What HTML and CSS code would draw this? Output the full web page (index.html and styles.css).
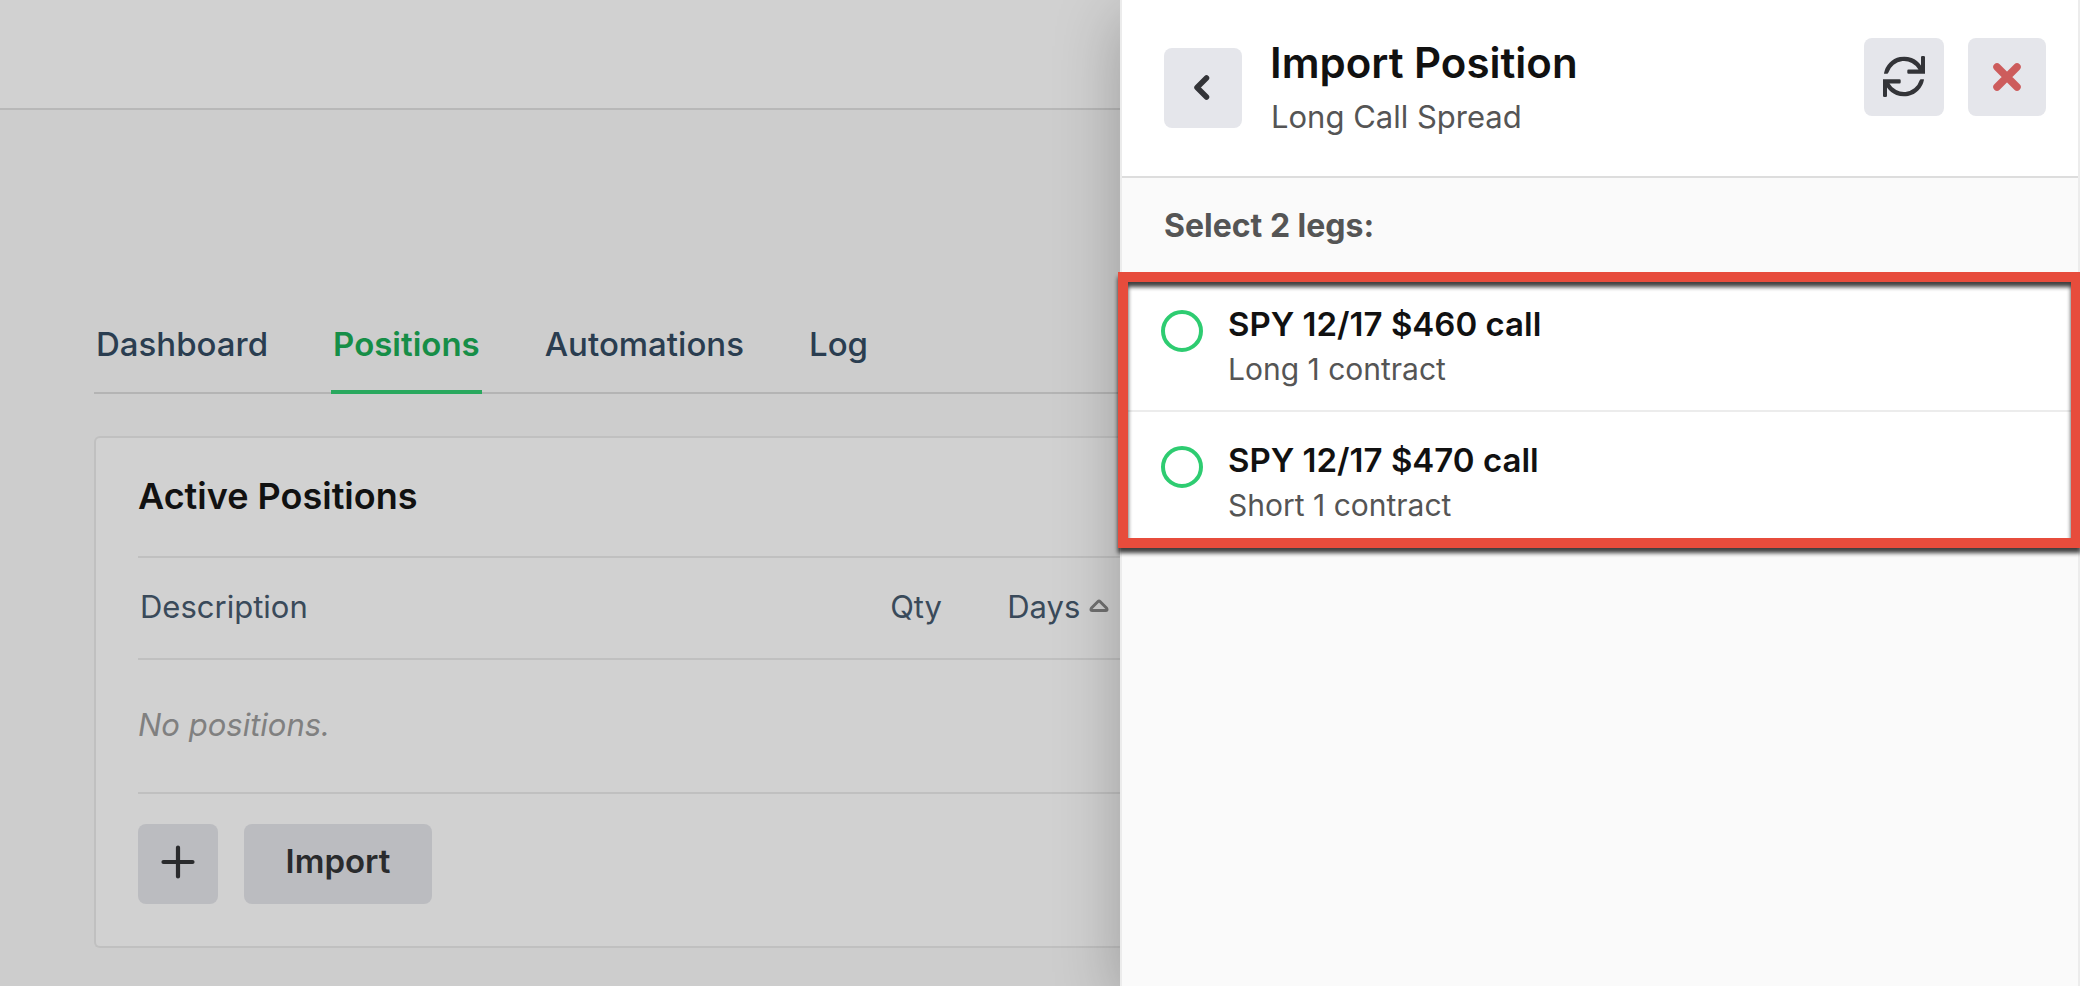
FILE: index.html
```html
<!DOCTYPE html>
<html lang="en">
<head>
  <meta charset="UTF-8">
  <meta name="viewport" content="width=device-width, initial-scale=1">
  <title>Import Position</title>
  <link rel="stylesheet" href="styles.css">
</head>
<body>
  <div class="app">
    <div class="page">
      <header class="topbar"></header>

      <main class="content">
        <nav class="tabs">
          <a href="#dashboard">Dashboard</a>
          <a href="#positions" class="active">Positions</a>
          <a href="#automations">Automations</a>
          <a href="#log">Log</a>
        </nav>

        <section class="card">
          <h2>Active Positions</h2>
          <table class="positions">
            <thead>
              <tr>
                <th>Description</th>
                <th class="num">Qty</th>
                <th class="num days">Days
                  <svg class="sort" viewBox="0 0 20 14" aria-hidden="true"><path d="M9 2.500Q10 1.500 11 2.500L17.500 9Q19 11.500 16.500 11.500H3.500Q1 11.500 2.500 9Z"/></svg>
                </th>
              </tr>
            </thead>
            <tbody>
              <tr>
                <td colspan="3" class="empty">No positions.</td>
              </tr>
            </tbody>
          </table>
          <div class="actions">
            <button class="btn icon-btn" aria-label="Add position">
              <svg width="34" height="34" viewBox="0 0 34 34"><path d="M17 2.500V31.500M2.500 17H31.500" stroke-width="4.200"/></svg>
            </button>
            <button class="btn import-btn">Import</button>
          </div>
        </section>
      </main>
    </div>

    <aside class="drawer">
      <header class="drawer-header">
        <button class="btn back-btn" aria-label="Back">
          <svg width="20" height="28" viewBox="0 0 20 28"><path d="M13.500 4L4 13.500L13.500 23" stroke-width="5.500" stroke-linejoin="round"/></svg>
        </button>
        <div class="heading">
          <h1>Import Position</h1>
          <p>Long Call Spread</p>
        </div>
        <div class="tools">
          <button class="btn refresh-btn" aria-label="Refresh">
            <svg width="42" height="42" viewBox="0 0 42 42">
              <g id="arrow">
                <path class="solid" d="M1 17.300A20.500 20.500 0 0 1 38 9.500V1.200Q38 0 39.200 0H40.800Q42 0 42 1.200V17.800H25.500Q24.300 17.800 24.300 16.600V14.800Q24.300 13.600 25.500 13.600H35.500A16.400 16.400 0 0 0 5.400 16.500Q5 17.800 4 17.800H1.500Q1 17.800 1 17.300Z"/>
              </g>
              <use href="#arrow" transform="rotate(180 21 20.500)"/>
            </svg>
          </button>
          <button class="btn close-btn" aria-label="Close">
            <svg width="30" height="30" viewBox="0 0 30 30"><path d="M5 5L25 25M25 5L5 25" stroke-width="7.500"/></svg>
          </button>
        </div>
      </header>

      <h3 class="legs-title">Select 2 legs:</h3>
      <div class="legs">
        <div class="leg">
          <input type="checkbox" id="leg1">
          <label for="leg1">
            <strong>SPY 12/17 $460 call</strong>
            <span>Long 1 contract</span>
          </label>
        </div>
        <div class="leg">
          <input type="checkbox" id="leg2">
          <label for="leg2">
            <strong>SPY 12/17 $470 call</strong>
            <span>Short 1 contract</span>
          </label>
        </div>
        <div class="highlight"></div>
      </div>
    </aside>
  </div>
</body>
</html>
```
FILE: styles.css
```css
* {
  box-sizing: border-box;
}

body {
  margin: 0;
  font-family: Inter, "Liberation Sans", sans-serif;
  font-size: 31px;
  line-height: 40px;
  color: #111;
  background: #cdcdcd;
}

h1, h2, h3, p {
  margin: 0;
}

.app {
  display: grid;
  grid-template-columns: minmax(0, 7fr) minmax(0, 6fr);
  min-height: 100vh;
  overflow: hidden;
}

/* page behind the drawer */
.page {
  overflow: hidden;
}

.topbar {
  height: 110px;
  background: #d1d1d1;
  border-bottom: 2px solid #b8b8b8;
}

.content {
  padding: 214px 0 38px 94px;
}

.tabs {
  display: flex;
  gap: 61px;
  border-bottom: 2px solid #b4b4b4;
}

.tabs a {
  height: 70px;
  margin-bottom: -2px;
  padding: 0 2px;
  font-size: 33px;
  font-weight: 500;
  color: #2a3d50;
  text-decoration: none;
  white-space: nowrap;
}

.tabs a.active {
  font-weight: 600;
  color: #168e47;
  border-bottom: 4px solid #29a85e;
}

.card {
  margin-top: 42px;
  padding: 38px 0 42px 42px;
  background: #d1d1d1;
  border: 2px solid #c0c0c0;
  border-right: 0;
  border-radius: 6px 0 0 6px;
}

.card h2 {
  font-size: 36px;
  font-weight: 600;
}

.positions {
  width: 100%;
  margin-top: 40px;
  border-collapse: collapse;
}

.positions th,
.positions td {
  padding: 29px 0 31px;
  border-top: 2px solid #c0c0c0;
  border-bottom: 2px solid #c0c0c0;
}

.positions th {
  padding-left: 2px;
  font-weight: 400;
  color: #3a4a5a;
  text-align: left;
}

.positions th.num {
  text-align: right;
}

.positions th.days {
  width: 178px;
  padding-right: 11px;
  white-space: nowrap;
}

.sort {
  width: 20px;
  height: 14px;
  margin-bottom: 5px;
  fill: none;
  stroke: #707070;
  stroke-width: 3;
  stroke-linejoin: round;
}

.positions td.empty {
  padding: 45px 0 47px;
  font-style: italic;
  color: #808080;
}

.actions {
  display: flex;
  gap: 26px;
  margin-top: 30px;
}

.btn {
  display: flex;
  align-items: center;
  justify-content: center;
  width: 78px;
  height: 78px;
  padding: 0;
  font: inherit;
  color: #333438;
  background: #e5e6eb;
  border: 0;
  border-radius: 8px;
  cursor: pointer;
}

.btn svg {
  fill: none;
  stroke: currentColor;
  stroke-linecap: round;
}

.btn .solid {
  fill: currentColor;
  stroke: none;
}

.actions .btn {
  width: 80px;
  height: 80px;
  color: #2a2b2d;
  background: #bbbcc0;
}

.actions .import-btn {
  width: 188px;
  padding-bottom: 6px;
  font-size: 33px;
  font-weight: 600;
}

.actions .icon-btn {
  padding-bottom: 4px;
}

/* drawer */
.drawer {
  position: relative;
  z-index: 1;
  background: #fafafa;
  border: solid #ececec;
  border-width: 0 2px;
  box-shadow: 0 16px 60px rgba(0, 0, 0, 0.25);
}

.drawer-header {
  display: flex;
  align-items: flex-start;
  padding: 39px 32px 39px 42px;
  background: #fff;
  border-bottom: 2px solid #ddd;
}

.back-btn {
  height: 80px;
  margin-top: 9px;
}

.heading {
  flex: 1;
  margin-left: 28px;
}

.heading h1 {
  font-size: 42px;
  font-weight: 600;
  line-height: 48px;
}

.heading p {
  margin: 10px 0 0 1px;
  color: #555;
}

.tools {
  display: flex;
  gap: 24px;
  margin-top: -1px;
}

.refresh-btn {
  width: 80px;
}

.close-btn {
  color: #cd5c5c;
}

.legs-title {
  padding: 28px 42px 30px;
  font-size: 32px;
  font-weight: 700;
  color: #555;
}

.legs {
  position: relative;
}

.leg {
  display: flex;
  align-items: flex-start;
  gap: 25px;
  padding: 28px 39px 21px;
  background: #fff;
  border-bottom: 2px solid #ececec;
}

.leg input {
  appearance: none;
  width: 42px;
  height: 42px;
  margin: 6px 0 0;
  border: 4px solid #2ecc71;
  border-radius: 50%;
  cursor: pointer;
}

.leg input:checked {
  background: #2ecc71;
}

.leg label {
  display: grid;
  gap: 5px;
  cursor: pointer;
}

.leg strong {
  font-size: 33px;
  font-weight: 600;
}

.leg span {
  font-size: 30px;
  color: #555;
}

.highlight {
  position: absolute;
  inset: -4px -3px 0 -4px;
  border: 10px solid #e74c3c;
  filter: drop-shadow(0 5px 2px rgba(0, 0, 0, 0.75));
  pointer-events: none;
}
```
